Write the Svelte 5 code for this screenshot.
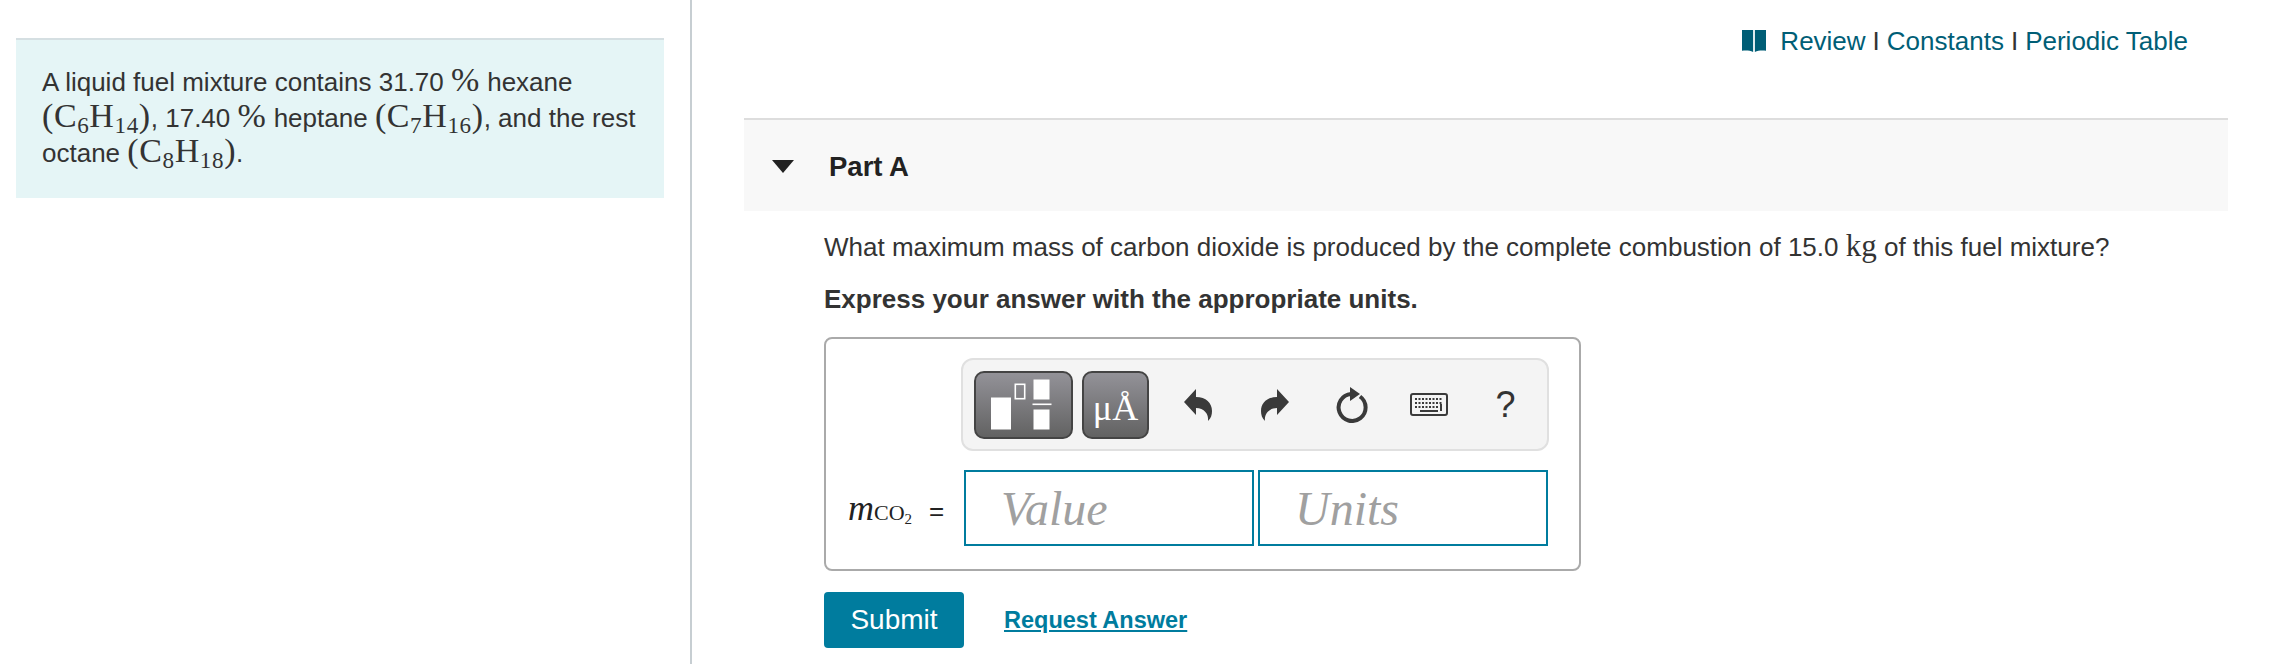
<script>
  const tools = ["undo", "redo", "reset", "keyboard"];
</script>

<div class="page">
  <aside class="side">
    <div class="intro">
      A liquid fuel mixture contains 31.70 <span class="m big">%</span> hexane<br />
      <span class="m big">(C<sub>6</sub>H<sub>14</sub>)</span>, 17.40 <span class="m big">%</span> heptane
      <span class="m big">(C<sub>7</sub>H<sub>16</sub>)</span>, and the rest<br />
      octane <span class="m big">(C<sub>8</sub>H<sub>18</sub>)</span>.
    </div>
  </aside>

  <main class="main">
    <div class="links">
      <svg class="book" viewBox="0 0 22 20" width="24" height="22">
        <path d="M0 0h10.200v20C7 18.500 3 18.500 0 19zM11.800 0H22v19c-3-.5-7-.5-10.200 1z" fill="#005e76" />
      </svg>
      <a href="#review">Review</a><span class="sep">I</span><a href="#constants">Constants</a><span class="sep">I</span><a href="#table">Periodic Table</a>
    </div>

    <div class="part-head">
      <span class="caret"></span>
      <h2>Part A</h2>
    </div>

    <section class="part-body">
      <p class="question">
        What maximum mass of carbon dioxide is produced by the complete combustion of 15.0 <span class="m big kg">kg</span> of this fuel mixture?
      </p>
      <p class="instr">Express your answer with the appropriate units.</p>

      <div class="answer">
        <div class="toolbar">
          <button class="tpl tpl-a" type="button" aria-label="templates">
            <svg viewBox="0 0 66 52" width="66" height="52">
              <rect x="0" y="18.500" width="20" height="32" fill="#fff" />
              <rect x="24.300" y="5.300" width="9.400" height="14.400" fill="none" stroke="#fff" stroke-width="1.600" />
              <rect x="42.500" y="0.500" width="16" height="20" fill="#fff" />
              <rect x="41.500" y="24.500" width="19" height="1.600" fill="#fff" />
              <rect x="42.500" y="30.500" width="16" height="20" fill="#fff" />
            </svg>
          </button>
          <button class="tpl tpl-b" type="button">μÅ</button>
          <div class="actions">
            {#each tools as t}
              <span class="tool">
                {#if t === "undo"}
                  <svg viewBox="0 0 28 32" width="28" height="32"><path d="M0 13 12 0v8c10 0 16 6 16 14 0 4-1 7-4 10 1-7-4-13-12-13v7z" fill="#3a3a3a" /></svg>
                {:else if t === "redo"}
                  <svg viewBox="0 0 28 32" width="28" height="32"><path d="M28 13 16 0v8C6 8 0 14 0 22c0 4 1 7 4 10-1-7 4-13 12-13v7z" fill="#3a3a3a" /></svg>
                {:else if t === "reset"}
                  <svg viewBox="0 0 32 36" width="32" height="36"><path d="M15 7A13.500 13.500 0 1 0 24 9.500" fill="none" stroke="#3a3a3a" stroke-width="4" /><path d="M14 0l10 7-10 7z" fill="#3a3a3a" /></svg>
                {:else}
                  <svg viewBox="0 0 38 23" width="38" height="23">
                    <rect x="1" y="1" width="36" height="21" rx="2" fill="none" stroke="#3a3a3a" stroke-width="2" />
                    <path d="M5 6h28M5 10h28M5 14h24" stroke="#3a3a3a" stroke-width="2" stroke-dasharray="2 1.500" />
                    <path d="M10 18h18M31 11v7" stroke="#3a3a3a" stroke-width="2" />
                  </svg>
                {/if}
              </span>
            {/each}
            <span class="tool help">?</span>
          </div>
        </div>

        <div class="entry">
          <span class="label"><i class="m">m</i><span class="m co">CO<sub>2</sub></span><span class="eq">=</span></span>
          <div class="field">Value</div>
          <div class="field">Units</div>
        </div>
      </div>

      <div class="actions-row">
        <button class="submit" type="button">Submit</button>
        <a class="request" href="#answer">Request Answer</a>
      </div>
    </section>
  </main>
</div>

<style>
  :global(body) {
    margin: 0;
    background: #fff;
  }

  .page {
    display: flex;
    width: 2280px;
    height: 664px;
    overflow: hidden;
    font-family: "Liberation Sans", Arial, sans-serif;
    font-size: 26px;
    color: #333;
  }

  .side {
    box-sizing: border-box;
    width: 692px;
    border-right: 2px solid #c7ced2;
    padding: 38px 0 0 16px;
  }

  .intro {
    box-sizing: border-box;
    width: 648px;
    height: 160px;
    padding: 25px 26px;
    background: #e5f5f6;
    border-top: 2px solid #d5dfe2;
    line-height: 35.500px;
    white-space: nowrap;
  }

  .intro .big {
    letter-spacing: 0.6px;
  }

  .m {
    font-family: "Liberation Serif", "Times New Roman", serif;
  }

  .big {
    font-size: 34px;
    line-height: 0;
  }

  .m sub {
    font-size: 0.68em;
    line-height: 0;
    vertical-align: -0.25em;
  }

  .kg {
    font-size: 31px;
  }

  .main {
    flex: 1;
    padding: 0 52px;
    min-width: 0;
  }

  .links {
    display: flex;
    justify-content: flex-end;
    align-items: center;
    height: 118px;
    box-sizing: border-box;
    padding: 0 40px 36px 0;
    font-size: 26px;
    white-space: nowrap;
  }

  .links a {
    color: #005e76;
    text-decoration: none;
  }

  .book {
    margin-right: 14px;
  }

  .sep {
    margin: 0 7px;
    color: #333;
  }

  .part-head {
    display: flex;
    align-items: center;
    box-sizing: border-box;
    height: 93px;
    padding: 2px 0 0 28px;
    background: #f8f8f8;
    border-top: 2px solid #ddd;
  }

  .caret {
    width: 0;
    height: 0;
    border-left: 11px solid transparent;
    border-right: 11px solid transparent;
    border-top: 13px solid #222;
    margin-right: 35px;
  }

  h2 {
    margin: 0;
    font-size: 27.500px;
    font-weight: 700;
    color: #222;
  }

  .part-body {
    padding: 18px 0 0 80px;
  }

  p {
    margin: 0;
    line-height: 36px;
    white-space: nowrap;
  }

  .instr {
    margin-top: 16px;
    font-weight: 700;
  }

  .answer {
    box-sizing: border-box;
    width: 757px;
    height: 234px;
    margin-top: 20px;
    padding: 19px 30px 0 135px;
    border: 2px solid #aaa;
    border-radius: 8px;
  }

  .toolbar {
    display: flex;
    align-items: center;
    box-sizing: border-box;
    width: 588px;
    height: 93px;
    padding-left: 11px;
    background: #f4f4f4;
    border: 2px solid #e0e0e0;
    border-radius: 12px;
  }

  .tpl {
    box-sizing: border-box;
    height: 68px;
    padding: 0;
    border: 2px solid #444;
    border-radius: 10px;
    background: linear-gradient(#939298, #626262);
    color: #fff;
  }

  .tpl-a {
    width: 99px;
    display: flex;
    align-items: center;
    justify-content: center;
  }

  .tpl-b {
    width: 67px;
    margin-left: 9px;
    font-family: "Liberation Serif", serif;
    font-size: 36px;
    line-height: 1;
    padding-top: 6px;
  }

  .actions {
    display: flex;
    align-items: center;
    flex: 1;
    padding-left: 10px;
  }

  .tool {
    display: flex;
    justify-content: center;
    width: 77px;
  }

  .help {
    font-size: 36px;
    color: #333;
  }

  .entry {
    display: flex;
    align-items: center;
    margin: 19px 0 0 -120px;
  }

  .label {
    display: flex;
    flex: none;
    align-items: baseline;
    box-sizing: border-box;
    width: 123px;
    padding-left: 7px;
    white-space: nowrap;
    color: #222;
  }

  .label i {
    font-size: 36px;
  }

  .co {
    font-size: 22px;
  }

  .eq {
    margin-left: 17px;
  }

  .field {
    flex: none;
    box-sizing: border-box;
    width: 290px;
    height: 76px;
    margin-right: 4px;
    padding: 9px 0 0 35px;
    border: 2px solid #007c9e;
    font-family: "Liberation Serif", serif;
    font-style: italic;
    font-size: 48px;
    color: #a0a0a0;
  }

  .field + .field {
    margin-right: 0;
  }

  .actions-row {
    display: flex;
    align-items: center;
    margin-top: 21px;
  }

  .submit {
    width: 140px;
    height: 56px;
    border: none;
    border-radius: 4px;
    background: #007c9e;
    color: #fff;
    font-family: inherit;
    font-size: 28px;
  }

  .request {
    margin-left: 40px;
    color: #007c9e;
    font-weight: 700;
    font-size: 23.500px;
  }
</style>
